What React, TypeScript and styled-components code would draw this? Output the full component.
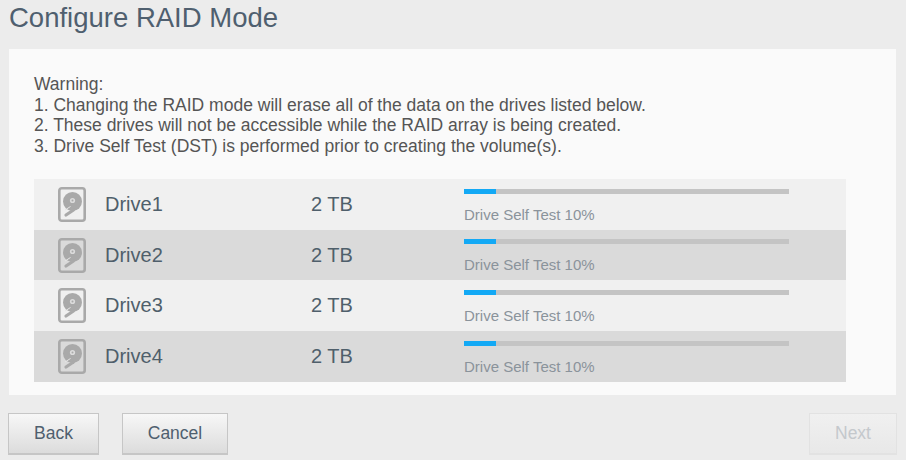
import { createGlobalStyle } from "styled-components";
import styled from "styled-components";

const drives = ["Drive1", "Drive2", "Drive3", "Drive4"];

const warnings = [
  "Warning:",
  "1. Changing the RAID mode will erase all of the data on the drives listed below.",
  "2. These drives will not be accessible while the RAID array is being created.",
  "3. Drive Self Test (DST) is performed prior to creating the volume(s).",
];

function DriveIcon() {
  return (
    <svg width="28" height="35" viewBox="0 0 28 35" fill="none">
      <rect x="1.3" y="1.3" width="25.4" height="32.4" rx="2.5" stroke="#a9a9a9" strokeWidth="2.6" />
      <circle cx="14.5" cy="14.5" r="9.5" fill="#a9a9a9" />
      <circle cx="14.5" cy="13.5" r="2.6" fill="#dcdcdc" />
      <circle cx="14.5" cy="13.5" r="1" fill="#a9a9a9" />
      <path d="M7 23 L12.5 19.5" stroke="#e6e6e6" strokeWidth="1" />
      <path d="M8 28 L15.5 23" stroke="#a9a9a9" strokeWidth="3.2" strokeLinecap="round" />
    </svg>
  );
}

function App() {
  return (
    <>
      <GlobalStyle />
      <Page>
        <Title>Configure RAID Mode</Title>
        <Panel>
          <Warning>
            {warnings.map((line) => (
              <div key={line}>{line}</div>
            ))}
          </Warning>
          <DriveList>
            {drives.map((drive, i) => (
              <DriveRow key={drive} $dark={i % 2 === 1}>
                <IconCell>
                  <DriveIcon />
                </IconCell>
                <DriveName>{drive}</DriveName>
                <DriveSize>2 TB</DriveSize>
                <Status>
                  <Track>
                    <Fill style={{ width: "32px" }} />
                  </Track>
                  <StatusText>Drive Self Test 10%</StatusText>
                </Status>
              </DriveRow>
            ))}
          </DriveList>
        </Panel>
        <Footer>
          <Button>Back</Button>
          <CancelButton>Cancel</CancelButton>
          <NextButton disabled>Next</NextButton>
        </Footer>
      </Page>
    </>
  );
}
export default App;

const GlobalStyle = createGlobalStyle`
  html, body {
    margin: 0;
    padding: 0;
    background: #ececec;
  }
  * {
    box-sizing: border-box;
  }
`;

const Page = styled.div`
  width: 906px;
  height: 460px;
  overflow: hidden;
  padding: 0 9px;
  font-family: "Liberation Sans", Arial, sans-serif;
  color: #4f5f6b;
  background: #ececec;
  display: flex;
  flex-direction: column;
`;

const Title = styled.h1`
  margin: 0;
  height: 49px;
  padding-top: 3px;
  font-size: 27.5px;
  line-height: 30px;
  font-weight: normal;
  color: #4f5f6f;
`;

const Panel = styled.div`
  width: 887px;
  height: 346px;
  background: #fafafa;
  padding: 25px 25px 0;
`;

const Warning = styled.div`
  font-size: 17.5px;
  line-height: 20.5px;
  height: 105px;
  color: #555;
`;

const DriveList = styled.div`
  width: 812px;
`;

const DriveRow = styled.div<{ $dark: boolean }>`
  height: 50.7px;
  display: flex;
  align-items: center;
  background: ${(props) => (props.$dark ? "#dadada" : "#f0f0f0")};
`;

const IconCell = styled.div`
  width: 71px;
  padding-left: 24px;
  display: flex;
`;

const DriveName = styled.div`
  width: 206px;
  font-size: 20px;
`;

const DriveSize = styled.div`
  width: 153px;
  font-size: 20px;
`;

const Status = styled.div`
  width: 325px;
  align-self: flex-start;
  padding-top: 9.6px;
`;

const Track = styled.div`
  height: 5px;
  background: #c4c4c4;
`;

const Fill = styled.div`
  height: 100%;
  background: #13a9f5;
`;

const StatusText = styled.div`
  margin-top: 12px;
  font-size: 15px;
  line-height: 17px;
  color: #8a939b;
`;

const Footer = styled.div`
  display: flex;
  margin: 18px 0 0 -1px;
  gap: 23px;
`;

const Button = styled.button`
  width: 91px;
  height: 42px;
  padding: 0;
  font-family: inherit;
  font-size: 17.5px;
  color: #4f5f6f;
  background: linear-gradient(#f7f7f7, #dcdcdc);
  border: 1px solid #c6c6c6;
  border-bottom-width: 2px;
`;

const CancelButton = styled(Button)`
  width: 106px;
`;

const NextButton = styled(Button)`
  width: 88px;
  margin-left: auto;
  color: #c4c8cc;
  background: linear-gradient(#f0f0f0, #e8e8e8);
  border-color: #e2e2e2;
`;
